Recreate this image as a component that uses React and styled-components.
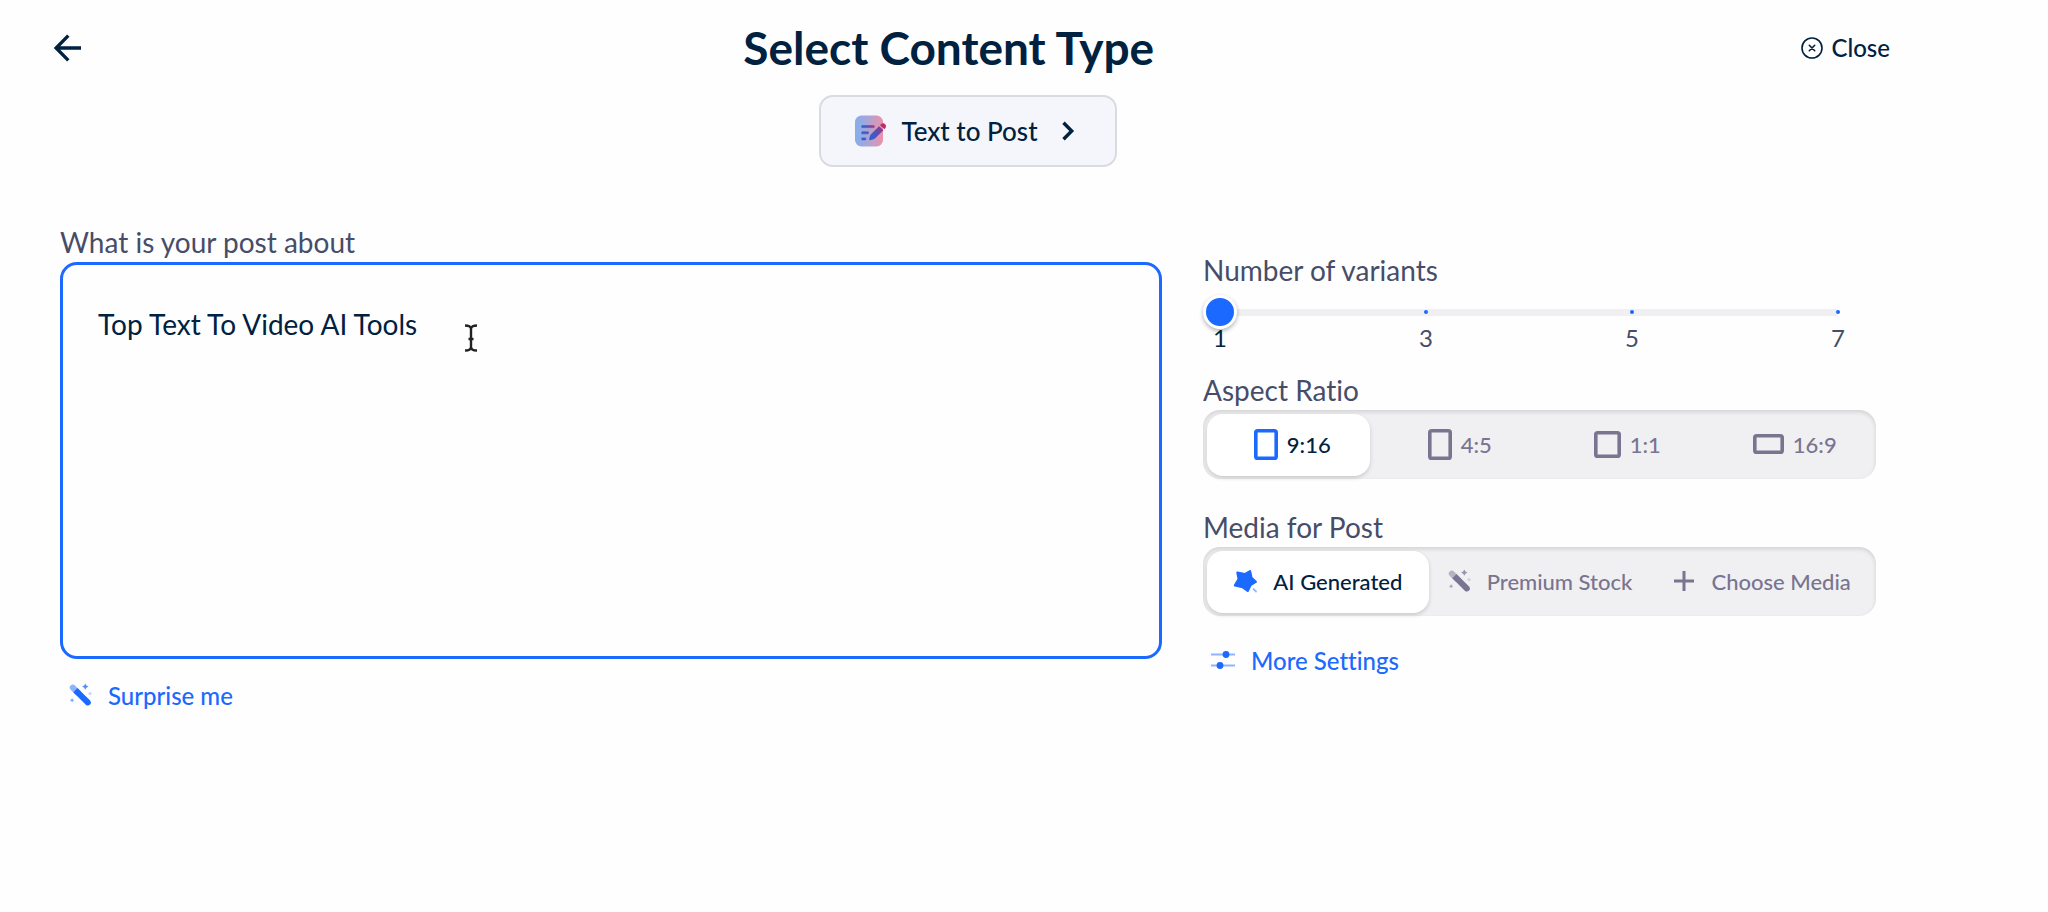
import React, { useState } from "react";
import styled, { createGlobalStyle, ThemeProvider } from "styled-components";

const theme = {
  navy: "#00213f",
  label: "#474d69",
  muted: "#797490",
  blue: "#1b69ff",
  track: "#f0f0f3",
  page: "#fefefe",
};

const GlobalStyle = createGlobalStyle`
  *, *::before, *::after { box-sizing: border-box; }
  body {
    margin: 0;
    background: ${theme.page};
    color: ${theme.navy};
    font-family: Lato, "Liberation Sans", sans-serif;
    font-variant-ligatures: none;
  }
  button, textarea, input { font: inherit; color: inherit; font-variant-ligatures: none; }
  svg { display: block; flex: none; }
`;

const Header = styled.header`
  display: flex;
  align-items: center;
  justify-content: space-between;
  height: 95px;
  padding: 0 158px 0 40px;
`;

const Title = styled.h1`
  margin: 0;
  font-size: 46px;
  line-height: 56px;
  font-weight: 700;
`;

const PlainButton = styled.button`
  display: flex;
  align-items: center;
  padding: 0;
  border: 0;
  background: none;
  cursor: pointer;
`;

const BackButton = styled(PlainButton)`
  justify-content: center;
  width: 56px;
  height: 56px;
`;

const CloseButton = styled(PlainButton)`
  gap: 8px;
  font-size: 24px;
  font-weight: 500;
`;

const ActionButton = styled(PlainButton)`
  align-self: flex-start;
  gap: 16px;
  height: ${(p) => p.$height}px;
  padding: 0 8px;
  color: ${(p) => p.theme.blue};
  font-size: 24px;
  font-weight: 500;
`;

const Content = styled.main`
  display: flex;
  flex-direction: column;
  gap: 59px;
  padding: 0 172px 60px 60px;
`;

const TypeButton = styled.button`
  align-self: center;
  display: flex;
  align-items: center;
  gap: 14px;
  height: 72px;
  padding: 0 34px;
  border: 2px solid #dadbe2;
  border-radius: 14px;
  background: #f5f6fb;
  font-size: 26px;
  font-weight: 500;
  cursor: pointer;
`;

const TypeName = styled.span`
  padding-right: 5px;
`;

const Columns = styled.div`
  display: grid;
  grid-template-columns: 1102fr 673fr;
  gap: 41px;
  align-items: start;
`;

const PromptColumn = styled.section`
  display: flex;
  flex-direction: column;
  gap: 20px;
`;

const SettingsColumn = styled.section`
  display: flex;
  flex-direction: column;
  gap: 24px;
  padding-top: 28px;
`;

const Field = styled.div`
  position: relative;
  display: flex;
  flex-direction: column;
  gap: 4px;
`;

const OptionField = styled.fieldset`
  min-width: 0;
  margin: 0 0 8px;
  padding: 0;
  border: 0;
`;

const FieldLabel = styled.label`
  color: ${(p) => p.theme.label};
  font-size: 28px;
  line-height: 32px;
`;

const Legend = styled.legend`
  padding: 0 0 4px;
  color: ${(p) => p.theme.label};
  font-size: 28px;
  line-height: 32px;
`;

const Prompt = styled.textarea`
  display: block;
  width: 100%;
  height: 397px;
  padding: 41px 35px;
  border: 3px solid ${(p) => p.theme.blue};
  border-radius: 17px;
  outline: 0;
  resize: none;
  background: transparent;
  font-size: 28px;
  line-height: 36px;
`;

const TextPointer = styled.svg`
  position: absolute;
  left: 404px;
  top: 98px;
  pointer-events: none;
`;

const SliderBody = styled.div`
  display: grid;
  margin: 8px 21px 0 0;
`;

const Slider = styled.input`
  grid-area: 1 / 1;
  appearance: none;
  width: 100%;
  height: 28px;
  margin: 0;
  background: linear-gradient(${(p) => p.theme.track}, ${(p) => p.theme.track})
    center / calc(100% - 34px) 7px no-repeat;
  cursor: pointer;

  &::-webkit-slider-thumb {
    appearance: none;
    width: 34px;
    height: 34px;
    border: 3px solid #fff;
    border-radius: 50%;
    background: ${(p) => p.theme.blue};
    box-shadow: 0 2px 4px rgba(0, 0, 0, 0.3);
  }
`;

const Marks = styled.div`
  grid-area: 1 / 1;
  display: flex;
  align-items: center;
  justify-content: space-between;
  padding: 0 15px;
  pointer-events: none;
`;

const Mark = styled.span`
  width: 4px;
  height: 4px;
  border-radius: 50%;
  background: ${(p) => (p.$hidden ? "transparent" : p.theme.blue)};
`;

const MarkLabels = styled.div`
  display: flex;
  justify-content: space-between;
  font-size: 24px;
  line-height: 24px;
`;

const MarkLabel = styled.span`
  width: 34px;
  text-align: center;
  color: ${(p) => (p.$active ? p.theme.navy : p.theme.label)};
`;

const Segments = styled.div`
  display: grid;
  grid-template-columns: repeat(${(p) => p.$count}, 1fr);
  gap: ${(p) => p.$gap}px;
  height: 69px;
  padding: 4px 4px 3px;
  border-radius: 17px;
  background: ${(p) => p.theme.track};
  box-shadow: inset 0 2px 4px rgba(0, 0, 0, 0.13);
`;

const Segment = styled.label`
  position: relative;
  display: flex;
  align-items: center;
  justify-content: center;
  gap: ${(p) => p.$iconGap}px;
  padding: 0 0 2px ${(p) => p.$indent}px;
  border-radius: 16px;
  color: ${(p) => (p.$active ? p.theme.navy : p.theme.muted)};
  background: ${(p) => (p.$active ? "#fff" : "none")};
  box-shadow: ${(p) => (p.$active ? "0 2px 4px rgba(0, 0, 0, 0.16)" : "none")};
  font-size: 22px;
  font-weight: 500;
  white-space: nowrap;
  cursor: pointer;

  svg { color: ${(p) => (p.$active ? p.theme.blue : p.theme.muted)}; }
`;

const SegmentInput = styled.input`
  position: absolute;
  inset: 0;
  margin: 0;
  opacity: 0;
  cursor: pointer;
`;

const BackIcon = () => (
  <svg width="28" height="28" viewBox="0 0 28 28" fill="none" stroke="currentColor" strokeWidth="3.4">
    <path d="M27 14H3M14.300 1.600 2.100 14l12.200 12.400" />
  </svg>
);

const CloseIcon = () => (
  <svg width="22" height="22" viewBox="0 0 22 22" fill="none" stroke="currentColor" strokeLinecap="round">
    <circle cx="11" cy="11" r="10" strokeWidth="1.6" />
    <path d="m8.3 8.3 5.4 5.4m0-5.4-5.4 5.4" strokeWidth="1.6" />
  </svg>
);

const ChevronIcon = () => (
  <svg width="24" height="24" viewBox="0 0 24 24" fill="none" stroke="currentColor" strokeWidth="3.4">
    <path d="m6.500 3.800 8.200 8.200-8.200 8.200" />
  </svg>
);

const PostIcon = () => (
  <svg width="32" height="32" viewBox="0 0 32 32">
    <defs>
      <linearGradient id="postCard" x1="0" x2="1">
        <stop offset="0" stopColor="#84aeee" />
        <stop offset="0.45" stopColor="#a9a5d6" />
        <stop offset="1" stopColor="#ee91a8" />
      </linearGradient>
      <linearGradient id="postInk" gradientUnits="userSpaceOnUse" x1="7" x2="31" y1="0" y2="0">
        <stop offset="0" stopColor="#1f66df" />
        <stop offset="0.45" stopColor="#5350b4" />
        <stop offset="0.8" stopColor="#a23578" />
        <stop offset="1" stopColor="#d32b5c" />
      </linearGradient>
      <linearGradient id="postLine" gradientUnits="userSpaceOnUse" x1="7" x2="20" y1="0" y2="0">
        <stop offset="0" stopColor="#1f66df" />
        <stop offset="0.6" stopColor="#6a4ba6" />
        <stop offset="1" stopColor="#d03062" />
      </linearGradient>
      <linearGradient id="postPencil" gradientUnits="userSpaceOnUse" x1="14" x2="28" y1="0" y2="0">
        <stop offset="0" stopColor="#1768e6" />
        <stop offset="1" stopColor="#963888" />
      </linearGradient>
    </defs>
    <rect x="0" y="0.5" width="28" height="31" rx="6.5" fill="url(#postCard)" />
    <path d="M6.8 10.6h12.4v2H6.8zM6.8 16.8h6.6v2H6.8zM6.8 22.9h4v2h-4z" fill="url(#postLine)" stroke="url(#postLine)" strokeWidth="0.6" strokeLinejoin="round" />
    <path d="m24.1 11.2 4.3 4.1-8.2 8c-1.4 1.2-3.3 1.8-6 1.9.1-2.6.7-4.7 2-6.1z" fill="url(#postPencil)" />
    <path d="M25.1 10.2c1.7-2.4 3.9-2.4 5.1-1 1.5 1.5 1 3.5-.8 5.1z" fill="url(#postInk)" />
  </svg>
);

const WandIcon = () => (
  <svg width="24" height="24" viewBox="0 0 24 24" fill="currentColor">
    <path d="M4.8 4.600 10 9.800" stroke="currentColor" strokeOpacity="0.5" strokeWidth="6" strokeLinecap="round" />
    <path d="m5.300 9.300 4.200-4.200L22.300 17.700a3 3 0 0 1-4.200 4.200z" />
    <path d="m17.3.4 1.100 2.100 2.100 1.100-2.100 1.100-1.100 2.100-1.100-2.100-2.100-1.100 2.100-1.100z" opacity="0.75" />
    <path d="m4.100 14.900.8 1.500 1.500.8-1.500.8-.8 1.500-.8-1.500-1.500-.8 1.500-.8z" opacity="0.6" />
    <circle cx="22" cy="10.600" r="1.600" opacity="0.25" />
  </svg>
);

const StarIcon = () => (
  <svg width="24" height="24" viewBox="0 0 24 24" fill="currentColor" stroke="currentColor" strokeLinejoin="round">
    <path d="m17 2.300 1.300 6.200 4.400 4.300-5.200 3.200-2.700 5.800-5-3.600-7.800-1.900L5.700 10 4.500 3.800l7.300 1.400z" strokeWidth="2.4" />
    <path d="m20.500 20 2.500 2.500" fill="none" strokeWidth="1.8" strokeOpacity="0.45" strokeLinecap="round" />
  </svg>
);

const PlusIcon = () => (
  <svg width="24" height="24" viewBox="0 0 24 24" fill="none" stroke="currentColor" strokeWidth="3">
    <path d="M12 2v20M2 12h20" />
  </svg>
);

const SettingsIcon = () => (
  <svg width="24" height="24" viewBox="0 0 24 24" fill="currentColor">
    <path d="M0 6.5h24M0 17.5h24" stroke="currentColor" strokeOpacity="0.5" strokeWidth="1.8" />
    <circle cx="15" cy="6.5" r="3.4" />
    <circle cx="9" cy="17.5" r="3.4" />
  </svg>
);

const RatioIcon = ({ width, height }) => (
  <svg width={width} height={height} viewBox={`0 0 ${width} ${height}`} fill="none" stroke="currentColor" strokeWidth="3.6">
    <rect x="1.8" y="1.8" width={width - 3.6} height={height - 3.6} rx="1.8" />
  </svg>
);

const variantSteps = [1, 3, 5, 7];

const ratios = [
  { value: "9:16", icon: <RatioIcon width={24} height={31} /> },
  { value: "4:5", icon: <RatioIcon width={24} height={31} /> },
  { value: "1:1", icon: <RatioIcon width={27} height={27} /> },
  { value: "16:9", icon: <RatioIcon width={31} height={20} /> },
];

const mediaSources = [
  { value: "AI Generated", icon: <StarIcon /> },
  { value: "Premium Stock", icon: <WandIcon /> },
  { value: "Choose Media", icon: <PlusIcon /> },
];

function SegmentedField({ legend, name, options, gap, iconGap, indent = 0 }) {
  const [selected, setSelected] = useState(options[0].value);
  return (
    <OptionField>
      <Legend>{legend}</Legend>
      <Segments $count={options.length} $gap={gap}>
        {options.map(({ value, icon }) => (
          <Segment key={value} $active={value === selected} $iconGap={iconGap} $indent={indent}>
            <SegmentInput
              type="radio"
              name={name}
              value={value}
              checked={value === selected}
              onChange={() => setSelected(value)}
            />
            {icon}
            {value}
          </Segment>
        ))}
      </Segments>
    </OptionField>
  );
}

function VariantsField() {
  const [count, setCount] = useState(1);
  return (
    <Field>
      <FieldLabel htmlFor="variants">Number of variants</FieldLabel>
      <SliderBody>
        <Slider
          id="variants"
          type="range"
          min="1"
          max="7"
          step="2"
          value={count}
          onChange={(e) => setCount(Number(e.target.value))}
        />
        <Marks>
          {variantSteps.map((n) => (
            <Mark key={n} $hidden={n === count} />
          ))}
        </Marks>
        <MarkLabels>
          {variantSteps.map((n) => (
            <MarkLabel key={n} $active={n === count}>{n}</MarkLabel>
          ))}
        </MarkLabels>
      </SliderBody>
    </Field>
  );
}

export default function App() {
  const [prompt, setPrompt] = useState("Top Text To Video AI Tools");
  return (
    <ThemeProvider theme={theme}>
      <GlobalStyle />
      <Header>
        <BackButton type="button" aria-label="Back"><BackIcon /></BackButton>
        <Title>Select Content Type</Title>
        <CloseButton type="button"><CloseIcon />Close</CloseButton>
      </Header>
      <Content>
        <TypeButton type="button">
          <PostIcon />
          <TypeName>Text to Post</TypeName>
          <ChevronIcon />
        </TypeButton>
        <Columns>
          <PromptColumn>
            <Field>
              <FieldLabel htmlFor="prompt">What is your post about</FieldLabel>
              <Prompt
                id="prompt"
                spellCheck={false}
                value={prompt}
                onChange={(e) => setPrompt(e.target.value)}
              />
              <TextPointer width="14" height="28" viewBox="0 0 14 28" fill="none" stroke="#222" strokeWidth="2.400">
                <path d="M1 1.500c3.600 0 6 1 6 3.500v18c0 2.500-2.400 3.500-6 3.500M13 1.500c-3.600 0-6 1-6 3.500v18c0 2.500 2.400 3.500 6 3.500M4.500 15h5" />
              </TextPointer>
            </Field>
            <ActionButton type="button" $height={32}><WandIcon />Surprise me</ActionButton>
          </PromptColumn>
          <SettingsColumn>
            <VariantsField />
            <SegmentedField legend="Aspect Ratio" name="ratio" options={ratios} gap={5} iconGap={9} indent={8} />
            <SegmentedField legend="Media for Post" name="media" options={mediaSources} gap={0} iconGap={16} />
            <ActionButton type="button" $height={24}><SettingsIcon />More Settings</ActionButton>
          </SettingsColumn>
        </Columns>
      </Content>
    </ThemeProvider>
  );
}
